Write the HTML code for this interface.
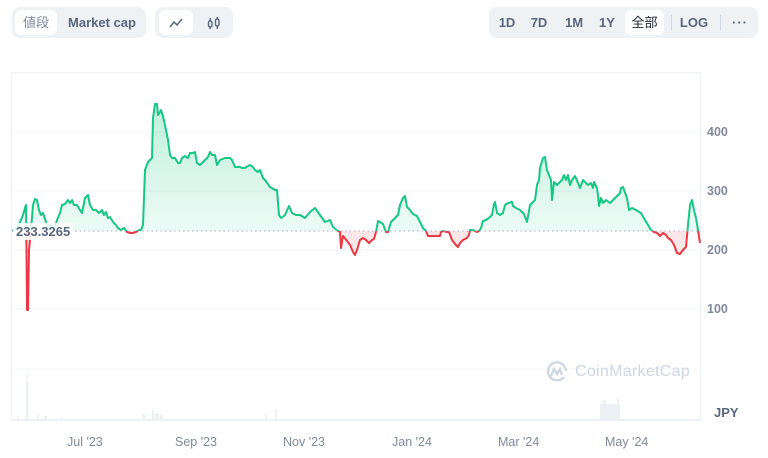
<!DOCTYPE html>
<html><head><meta charset="utf-8"><style>
*{margin:0;padding:0;box-sizing:border-box}
body{width:768px;height:458px;background:#fff;font-family:"Liberation Sans","Noto Sans CJK JP",sans-serif;position:relative;overflow:hidden;color:#58667e}
.g{position:absolute;background:#eff2f5;border-radius:8px;height:31px;top:7px}
.b{position:absolute;top:3px;height:25px;line-height:25px;font-size:13px;font-weight:bold;color:#58667e;text-align:center}
.w{background:#fff;border-radius:6px}
.yl{position:absolute;left:707px;font-size:12.5px;font-weight:bold;color:#808a9d}
.xl{position:absolute;top:435px;font-size:12.5px;color:#808a9d}
</style></head><body>
<div class="g" style="left:12px;width:134px">
 <div class="b w" style="left:3px;width:42px;font-weight:normal;color:#808a9d">値段</div>
 <div class="b" style="left:48px;width:84px">Market cap</div>
</div>
<div class="g" style="left:155px;width:78px">
 <div class="b w" style="left:4px;width:34px"><svg width="14" height="12" viewBox="0 0 14 12" style="margin-top:7px"><path d="M1 10L5 5L8 8L13 2" fill="none" stroke="#58667e" stroke-width="1.5"/></svg></div>
 <div class="b" style="left:42px;width:34px"><svg width="14" height="14" viewBox="0 0 14 14" style="margin-top:6px" fill="none" stroke="#58667e" stroke-width="1.4"><rect x="1.5" y="5" width="3.5" height="6" rx="1.5"/><path d="M3.2 2v3M3.2 11v2"/><rect x="8.5" y="3" width="3.5" height="7" rx="1.5"/><path d="M10.2 1v2M10.2 10v3"/></svg></div>
</div>
<div class="g" style="left:489px;width:269px">
 <div class="b" style="left:4px;width:28px">1D</div>
 <div class="b" style="left:36px;width:28px">7D</div>
 <div class="b" style="left:70px;width:30px">1M</div>
 <div class="b" style="left:104px;width:28px">1Y</div>
 <div class="b w" style="left:136px;width:39px;font-weight:normal;color:#222531">全部</div>
 <div style="position:absolute;left:182px;top:8px;width:1px;height:15px;background:#cfd6e4"></div>
 <div class="b" style="left:188px;width:34px">LOG</div>
 <div style="position:absolute;left:231px;top:8px;width:1px;height:15px;background:#cfd6e4"></div>
 <div class="b" style="left:238px;width:26px;letter-spacing:1px">···</div>
</div>

<svg width="768" height="458" style="position:absolute;left:0;top:0">
<defs>
<linearGradient id="gg" x1="0" y1="100" x2="0" y2="231" gradientUnits="userSpaceOnUse"><stop offset="0" stop-color="#16c784" stop-opacity="0.28"/><stop offset="1" stop-color="#16c784" stop-opacity="0.08"/></linearGradient>
<clipPath id="up"><rect x="0" y="0" width="701" height="231"/></clipPath>
<clipPath id="dn"><rect x="0" y="231" width="701" height="200"/></clipPath>
</defs>
<rect x="11.5" y="72.5" width="689" height="348" fill="none" stroke="#eff2f5"/>
<g stroke="#f2f4f7">
<line x1="12" x2="700" y1="132" y2="132"/><line x1="12" x2="700" y1="191" y2="191"/><line x1="12" x2="700" y1="250" y2="250"/><line x1="12" x2="700" y1="309" y2="309"/><line x1="12" x2="700" y1="369" y2="369"/>
</g>
<g id="pp"></g>
<line x1="12" x2="700" y1="231" y2="231" stroke="#a6b0c3" stroke-dasharray="1.5,3"/>
<g fill="#edf0f4">
<rect x="26" y="372" width="1.5" height="49"/><rect x="27.5" y="382" width="1" height="39"/><rect x="17" y="416" width="2" height="5"/><rect x="37" y="414" width="2" height="7"/><rect x="44" y="416" width="3" height="5"/><rect x="60" y="418" width="3" height="3"/>
<rect x="142" y="414" width="3" height="7"/><rect x="152" y="410" width="2" height="11"/><rect x="155" y="413" width="4" height="8"/><rect x="160" y="415" width="3" height="6"/>
<rect x="265" y="414" width="2" height="7"/><rect x="275" y="409" width="2" height="12"/>
<rect x="600" y="404" width="20" height="17"/><rect x="603" y="400" width="3" height="21"/><rect x="617" y="398" width="2" height="23"/>
<rect x="12" y="419" width="688" height="2"/>
</g>
</svg>
<div style="position:absolute;left:13px;top:223px;height:17px;line-height:17px;padding:0 3px;background:rgba(255,255,255,0.85);font-size:13px;font-weight:bold;color:#58667e">233.3265</div>
<div style="position:absolute;left:545px;top:360px;height:24px;display:flex;align-items:center;color:#cfd6e4;font-size:16px">
<svg width="24" height="24" viewBox="0 0 24 24" fill="none" stroke="#cfd6e4" stroke-width="2.3"><path d="M19 17A9 9 0 1 1 21 11"/><path d="M6 16L9 9L12 14L15 9L17 15"/></svg>
<span style="margin-left:6px;letter-spacing:0.3px">CoinMarketCap</span></div>
<div class="yl" style="top:125px">400</div>
<div class="yl" style="top:184px">300</div>
<div class="yl" style="top:243px">200</div>
<div class="yl" style="top:302px">100</div>
<div style="position:absolute;left:714px;top:405px;font-size:13px;font-weight:bold;color:#58667e">JPY</div>
<div class="xl" style="left:67px">Jul '23</div>
<div class="xl" style="left:175px">Sep '23</div>
<div class="xl" style="left:283px">Nov '23</div>
<div class="xl" style="left:392px">Jan '24</div>
<div class="xl" style="left:498px">Mar '24</div>
<div class="xl" style="left:605px">May '24</div>
<script>
var p="12,231 14,230 17,228 20,222 23,215 25,208 26,205 26.5,250 27,310 28,310 29,250 31,230 33,205 35,199 37,200 39,210 41,215 43,213 46,222 49,230 51,225 54,230 57,220 60,213 62,205 65,204 68,200 70,203 72,200 74,205 77,205 80,210 82,213 85,198 88,195 90,205 93,210 96,210 99,213 102,210 104,215 106,212 108,218 110,217 113,222 116,225 118,228 121,230 124,228 127,232 130,233 133,233 136,232 139,230 141,230 143,225 145,170 148,162 150,160 152,158 153,118 155,104 157,104 158,115 160,112 161,110 163,116 166,130 168,140 170,155 172,158 175,158 178,163 180,163 182,158 185,156 188,158 190,153 193,153 195,152 197,163 200,165 205,160 208,157 210,152 212,155 215,155 217,165 220,160 225,158 230,158 232,160 235,167 240,167 242,168 245,168 248,166 250,165 253,167 255,170 258,172 260,170 263,178 265,180 270,187 275,190 277,190 279,215 281,218 285,215 289,206 292,213 296,215 300,215 305,218 310,212 315,208 320,215 325,222 330,220 333,227 338,231 340,232 341,248 343,236 347,241 350,245 353,252 355,255 357,250 360,240 363,238 366,240 369,243 372,240 374,239 376,232 378,221 380,222 383,224 386,232 388,232 391,222 395,218 398,215 400,205 403,198 405,196 407,207 410,210 413,214 417,216 420,222 423,228 426,231 428,236 432,236 436,236 440,236 441,232 443,231 447,232 449,232 452,240 455,244 458,247 460,243 463,240 467,238 469,235 470,230 473,230 477,232 479,231 481,228 483,221 486,220 489,218 492,215 494,204 495,202 497,213 500,215 503,213 505,205 508,203 512,202 513,206 516,208 520,210 524,214 527,222 530,205 533,202 535,200 537,185 539,180 540,168 543,158 545,157 547,170 549,175 551,180 552,200 554,182 557,185 560,182 562,180 564,175 566,180 568,175 570,185 572,180 575,176 578,183 580,188 583,180 586,183 588,185 591,183 593,188 594,182 597,188 598,195 599,206 601,198 603,203 606,200 610,203 613,200 616,197 618,195 620,193 621,188 623,187 627,198 629,210 632,208 636,210 641,213 645,220 648,225 651,230 654,232 657,233 660,236 663,233 666,235 668,238 671,240 674,245 677,253 680,254 683,250 686,247 688,225 690,205 692,200 694,210 696,218 698,230 700,243";
var ns="http://www.w3.org/2000/svg",g=document.getElementById("pp");
function el(t,a){var e=document.createElementNS(ns,t);for(var k in a)e.setAttribute(k,a[k]);g.appendChild(e);return e;}
var fp=p+" 700,231 12,231";
el("polygon",{points:fp,fill:"url(#gg)","clip-path":"url(#up)"});
el("polygon",{points:fp,fill:"rgba(234,57,67,0.12)","clip-path":"url(#dn)"});
el("polyline",{points:p,fill:"none",stroke:"#16c784","stroke-width":"2","stroke-linejoin":"round","clip-path":"url(#up)"});
el("polyline",{points:p,fill:"none",stroke:"#ea3943","stroke-width":"2","stroke-linejoin":"round","clip-path":"url(#dn)"});
</script>
</body></html>
